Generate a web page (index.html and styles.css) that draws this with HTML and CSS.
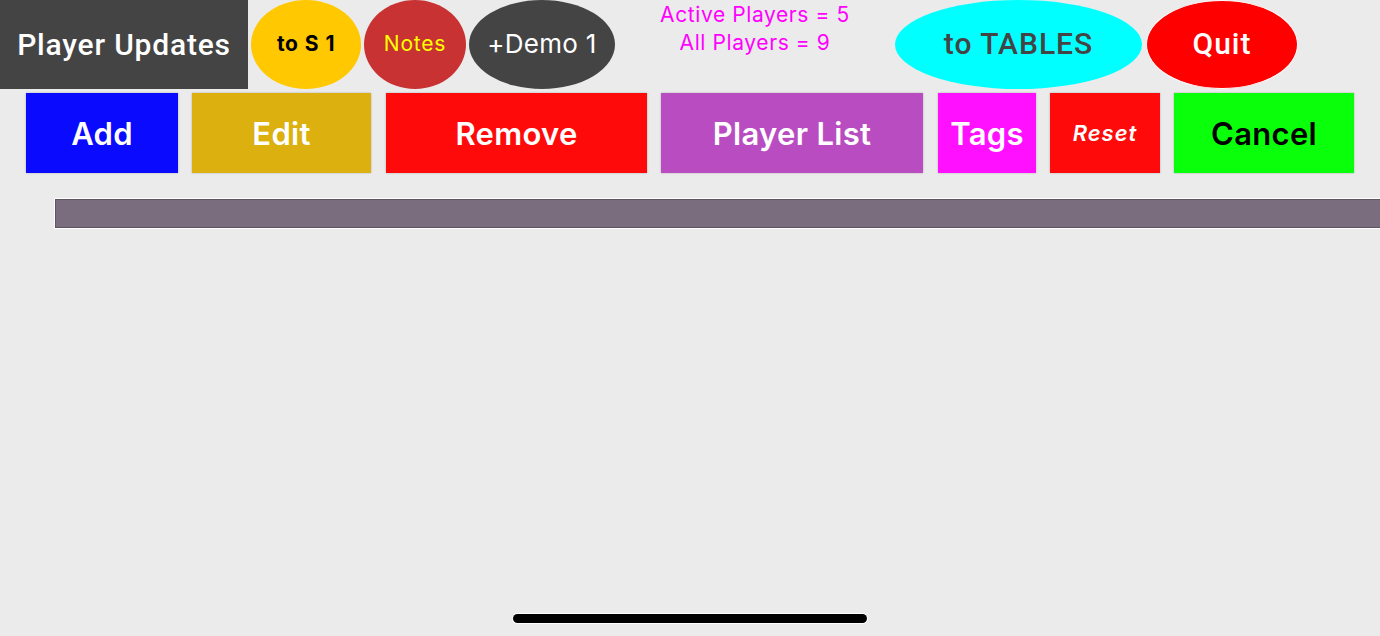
FILE: index.html
```html
<!DOCTYPE html>
<html>
<head>
<meta charset="utf-8">
<link rel="stylesheet" href="styles.css">
</head>
<body>
<div class="screen">
  <div class="toprow">
    <div class="title">Player Updates</div>
    <div class="oval oval-s1">to S 1</div>
    <div class="oval oval-notes">Notes</div>
    <div class="oval oval-demo">+Demo 1</div>
    <div class="counts">
      <div>Active Players = 5</div>
      <div>All Players = 9</div>
    </div>
    <div class="oval oval-tables">to TABLES</div>
    <div class="oval oval-quit">Quit</div>
  </div>
  <div class="btnrow">
    <div class="btn btn-add">Add</div>
    <div class="btn btn-edit">Edit</div>
    <div class="btn btn-remove">Remove</div>
    <div class="btn btn-list">Player List</div>
    <div class="btn btn-tags">Tags</div>
    <div class="btn btn-reset">Reset</div>
    <div class="btn btn-cancel">Cancel</div>
  </div>
  <div class="bar"></div>
  <div class="home"></div>
</div>
</body>
</html>
```
FILE: styles.css
```css
html, body {
  margin: 0;
  padding: 0;
}
body {
  background: #ebebeb;
  font-family: Inter, "Liberation Sans", sans-serif;
  width: 1380px;
  height: 636px;
  overflow: hidden;
}
.screen {
  position: relative;
  width: 1380px;
  height: 636px;
}
.toprow {
  display: flex;
  align-items: flex-start;
  height: 89px;
}
.title {
  width: 248px;
  height: 89px;
  background: #444444;
  color: #ffffff;
  font-family: Roboto, Inter, sans-serif;
  font-size: 30px;
  font-weight: 500;
  letter-spacing: 0.8px;
  display: flex;
  align-items: center;
  justify-content: center;
  padding-bottom: 1px;
  box-sizing: border-box;
}
.oval {
  height: 89px;
  border-radius: 50%;
  display: flex;
  align-items: center;
  justify-content: center;
  padding-bottom: 3px;
  box-sizing: border-box;
}
.oval-s1 {
  width: 110px;
  margin-left: 3px;
  background: #ffc800;
  color: #000;
  font-size: 21px;
  font-weight: 700;
  letter-spacing: 0.5px;
  word-spacing: 1px;
}
.oval-notes {
  width: 102px;
  margin-left: 3px;
  background: #c83232;
  color: #ffff00;
  font-size: 21px;
  letter-spacing: 0.8px;
}
.oval-demo {
  width: 146px;
  margin-left: 3px;
  background: #444444;
  color: #ffffff;
  font-size: 26px;
  letter-spacing: 0.3px;
}
.counts {
  width: 280px;
  color: #ff00ff;
  font-size: 21px;
  letter-spacing: 0.6px;
  line-height: 28px;
  text-align: center;
  padding-top: 1px;
}
.oval-tables {
  width: 247px;
  background: #00ffff;
  color: #444444;
  font-family: Roboto, Inter, sans-serif;
  font-size: 30px;
  font-weight: 500;
  letter-spacing: 1px;
}
.oval-quit {
  width: 152px;
  margin-left: 4px;
  background: #ff0000;
  color: #ffffff;
  font-family: Roboto, Inter, sans-serif;
  font-size: 30px;
  font-weight: 500;
  letter-spacing: 1px;
  border: 1px solid #ffffff;
}
.btnrow {
  display: flex;
  gap: 14px;
  padding-left: 26px;
  margin-top: 4px;
}
.btn {
  height: 80px;
  display: flex;
  align-items: center;
  justify-content: center;
  color: #ffffff;
  font-size: 31px;
  font-weight: 600;
  letter-spacing: 0.3px;
  box-shadow: 0 0 2px rgba(0,0,0,0.25);
}
.btn-add { width: 152px; background: #0a0aff; }
.btn-edit { width: 179px; background: #dcb00e; }
.btn-remove { width: 261px; background: #ff0a0a; margin-left: 1px; }
.btn-list { width: 262px; background: #b84cc0; }
.btn-tags { width: 98px; background: #ff10ff; margin-left: 1px; }
.btn-reset {
  width: 110px;
  background: #ff0a0a;
  font-size: 22px;
  font-style: italic;
  font-weight: 600;
  letter-spacing: 1px;
}
.btn-cancel {
  width: 180px;
  background: #0aff0a;
  color: #000000;
}
.bar {
  margin-top: 26px;
  margin-left: 55px;
  height: 29px;
  background: #7a6e7e;
  border: 1px solid #5e5462;
  border-right: none;
  box-sizing: border-box;
  box-shadow: 0 0 0 1px #ffffff;
}
.home {
  position: absolute;
  left: 513px;
  top: 614px;
  width: 354px;
  height: 9px;
  background: #000000;
  border-radius: 5px;
  box-shadow: 0 0 0 1px #ffffff;
}
```
